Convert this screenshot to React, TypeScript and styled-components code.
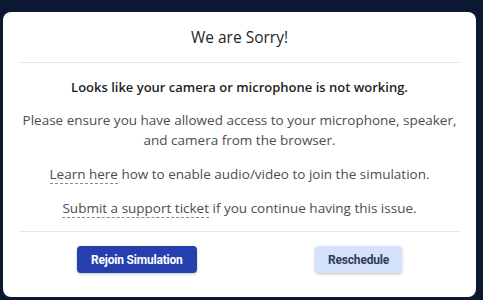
import React from 'react';
import styled, { createGlobalStyle } from 'styled-components';

const GlobalStyle = createGlobalStyle`
	html, body {
		margin: 0;
		padding: 0;
		background-color: #0c1731;
	}
	body {
		font-family: "Open Sans", "Noto Sans", sans-serif;
	}
`;

const Page = styled.div`
	width: 483px;
	height: 300px;
	box-sizing: border-box;
	padding: 12px 7px 3px 3px;
	background-color: #0c1731;
`;

const Card = styled.div`
	height: 285px;
	box-sizing: border-box;
	padding: 0 16px;
	background-color: #ffffff;
	border-radius: 8px;
	display: flex;
	flex-direction: column;
`;

const Header = styled.div`
	height: 50px;
	display: flex;
	align-items: center;
	justify-content: center;
	border-bottom: 1px solid #e6e6e6;
	font-size: 15.5px;
	color: #1f1f1f;
`;

const Body = styled.div`
	display: flex;
	flex-direction: column;
	align-items: center;
	padding-bottom: 13px;
	border-bottom: 1px solid #e6e6e6;
	text-align: center;
	font-size: 13.5px;
	line-height: 20px;
	color: #4d4d4d;
`;

const Lead = styled.div`
	margin-top: 14px;
	font-size: 13px;
	font-weight: 600;
	color: #1f1f1f;
`;

const Text = styled.div<{ $gap: number }>`
	margin-top: ${(p) => p.$gap}px;
	white-space: nowrap;
`;

const HelpLink = styled.a`
	color: inherit;
	text-decoration: none;
	border-bottom: 1px dashed #8a8a8a;
	cursor: pointer;
`;

const Footer = styled.div`
	display: flex;
	justify-content: space-between;
	padding: 14px 58px 0;
`;

const Button = styled.button<{ $primary?: boolean }>`
	height: 27px;
	padding: 0 ${(p) => (p.$primary ? 14 : 13)}px;
	border: none;
	border-radius: 4px;
	font-family: Roboto, "Liberation Sans", sans-serif;
	font-weight: 700;
	font-size: 12px;
	letter-spacing: -0.2px;
	color: ${(p) => (p.$primary ? '#ffffff' : '#2f3b5c')};
	background-color: ${(p) => (p.$primary ? '#263fae' : '#d5e2fb')};
	box-shadow: 0 1px 3px rgba(0, 0, 0, 0.25);
	cursor: pointer;
`;

export default function App() {
	return (
		<Page>
			<GlobalStyle />
			<Card>
				<Header>We are Sorry!</Header>
				<Body>
					<Lead>Looks like your camera or microphone is not working.</Lead>
					<Text $gap={13}>
						Please ensure you have allowed access to your microphone, speaker,
						<br />
						and camera from the browser.
					</Text>
					<Text $gap={14}>
						<HelpLink>Learn here</HelpLink> how to enable audio/video to join the simulation.
					</Text>
					<Text $gap={14}>
						<HelpLink>Submit a support ticket</HelpLink> if you continue having this issue.
					</Text>
				</Body>
				<Footer>
					<Button $primary>Rejoin Simulation</Button>
					<Button>Reschedule</Button>
				</Footer>
			</Card>
		</Page>
	);
}
